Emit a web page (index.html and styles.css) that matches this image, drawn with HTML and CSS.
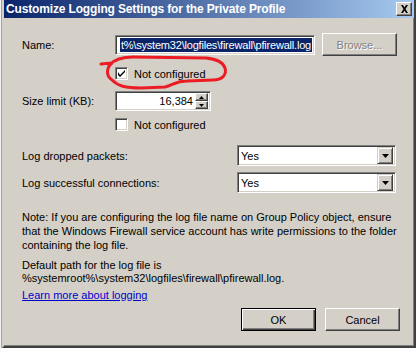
FILE: index.html
```html
<!DOCTYPE html>
<html lang="en">
<head>
    <meta charset="UTF-8">
    <title>Customize Logging Settings</title>
    <link rel="stylesheet" href="styles.css">
</head>
<body>
    <div class="screen">
        <div class="dialog">
            <!-- Title bar -->
            <div class="title-bar">
                <span class="title-text">Customize Logging Settings for the Private Profile</span>
                <span class="close-btn">
                    <svg width="9" height="8" viewBox="0 0 9 8"><path d="M1 0h2l1.5 2.5L6 0h2L5.5 4 8 8H6L4.5 5.5 3 8H1l2.5-4z" fill="#000"/></svg>
                </span>
            </div>

            <div class="content">
                <div class="row row-name">
                    <span class="label">Name:</span>
                    <div class="field field-name">
                        <span class="selected">t%\system32\logfiles\firewall\pfirewall.log</span>
                    </div>
                    <button class="btn btn-disabled">Browse...</button>
                </div>

                <div class="row row-check check-first">
                    <span class="checkbox">
                        <svg width="7" height="7" viewBox="0 0 7 7"><path d="M0 2v3l2 2 5-5V0L2 5z" fill="#000"/></svg>
                    </span>
                    <span>Not configured</span>
                </div>

                <div class="row row-size">
                    <span class="label">Size limit (KB):</span>
                    <div class="field field-spin">
                        <span class="spin-value">16,384</span>
                        <span class="spin-buttons">
                            <span class="spin-btn"><svg width="5" height="3" viewBox="0 0 5 3"><path d="M2.5 0L5 3H0z" fill="#000"/></svg></span>
                            <span class="spin-btn"><svg width="5" height="3" viewBox="0 0 5 3"><path d="M0 0h5L2.5 3z" fill="#000"/></svg></span>
                        </span>
                    </div>
                </div>

                <div class="row row-check check-second">
                    <span class="checkbox"></span>
                    <span>Not configured</span>
                </div>

                <div class="row row-select select-first">
                    <span class="label-wide">Log dropped packets:</span>
                    <div class="field select">
                        <span class="select-value">Yes</span>
                        <span class="select-arrow"><svg width="7" height="4" viewBox="0 0 7 4"><path d="M0 0h7L3.5 4z" fill="#000"/></svg></span>
                    </div>
                </div>

                <div class="row row-select select-second">
                    <span class="label-wide">Log successful connections:</span>
                    <div class="field select">
                        <span class="select-value">Yes</span>
                        <span class="select-arrow"><svg width="7" height="4" viewBox="0 0 7 4"><path d="M0 0h7L3.5 4z" fill="#000"/></svg></span>
                    </div>
                </div>

                <p class="note">Note: If you are configuring the log file name on Group Policy object, ensure<br>that the Windows Firewall service account has write permissions to the folder<br>containing the log file.</p>

                <p class="note note-path">Default path for the log file is<br>%systemroot%\system32\logfiles\firewall\pfirewall.log.</p>

                <a class="learn-link" href="#">Learn more about logging</a>

                <div class="actions">
                    <button class="btn btn-default">OK</button>
                    <button class="btn">Cancel</button>
                </div>
            </div>
        </div>

        <!-- Red hand-drawn annotation -->
        <svg class="annotation" width="418" height="353" viewBox="0 0 418 353">
            <path d="M100 64 L111 63 C106 67 104 75 111 80 C117 86 124 88 140 88 L164 87 C172 85 175 81 186 81 L212 80 C221 80 226 75 224 68 C222 62 215 59 205 58 L132 57 C121 57 113 60 108 65" fill="none" stroke="#ec1c24" stroke-width="3" stroke-linecap="round" stroke-linejoin="round"/>
        </svg>
    </div>
</body>
</html>
```

FILE: styles.css
```css
body {
    margin: 0;
    background-color: #ffffff;
    font-family: 'Liberation Sans', Arial, sans-serif;
    font-size: 11px;
    color: #000;
}

.screen {
    position: relative;
    width: 418px;
    height: 353px;
    overflow: hidden;
    border-left: 1px solid #f4f4f4;
    box-sizing: border-box;
}

.dialog {
    margin-left: 1px;
    width: 414px;
    height: 348px;
    box-sizing: border-box;
    background-color: #d4d0c8;
    border-left: 2px solid #d4d0c8;
    border-right: 2px solid #404040;
    border-bottom: 2px solid #404040;
    box-shadow: inset -1px -1px #808080, -1px 0 #a0a0a0;
    display: flex;
    flex-direction: column;
}

.title-bar {
    height: 18px;
    background: linear-gradient(to right, #0a246a, #a6caf0);
    display: flex;
    align-items: center;
    justify-content: space-between;
    padding: 0 2px 0 2px;
}

.title-text {
    color: #fff;
    font-weight: bold;
    font-size: 12px;
    letter-spacing: -0.15px;
}

.close-btn {
    width: 16px;
    height: 14px;
    box-sizing: border-box;
    background-color: #d4d0c8;
    border: 1px solid;
    border-color: #fff #404040 #404040 #fff;
    box-shadow: inset -1px -1px #808080;
    display: flex;
    align-items: center;
    justify-content: center;
}

.content {
    padding: 0 14px 0 18px;
    display: flex;
    flex-direction: column;
}

.row {
    display: flex;
    align-items: center;
}

.label {
    width: 93px;
    flex-shrink: 0;
}

.label-wide {
    flex: 1;
}

/* sunken edit box */
.field {
    box-sizing: border-box;
    background-color: #fff;
    border: 1px solid;
    border-color: #808080 #fff #fff #808080;
    box-shadow: inset 1px 1px #404040, inset -1px -1px #d4d0c8;
}

.row-name {
    margin-top: 15px;
    height: 23px;
}

.field-name {
    width: 200px;
    height: 20px;
    padding: 2px;
    display: flex;
    justify-content: flex-end;
    overflow: hidden;
}

.selected {
    background-color: #0a246a;
    color: #fff;
    white-space: nowrap;
    line-height: 14px;
    padding: 0 1px;
    letter-spacing: -0.2px;
}

.btn {
    box-sizing: border-box;
    width: 75px;
    height: 23px;
    font-family: 'Liberation Sans', Arial, sans-serif;
    font-size: 11px;
    color: #000;
    background-color: #d4d0c8;
    border: 1px solid;
    border-color: #fff #404040 #404040 #fff;
    box-shadow: inset -1px -1px #808080;
    padding: 0;
}

.btn-disabled {
    margin-left: 7px;
    color: #808080;
    text-shadow: 1px 1px #fff;
}

.row-check {
    height: 13px;
    padding-left: 93px;
}

.check-first {
    margin-top: 11px;
}

.check-second {
    margin-top: 7px;
}

.checkbox {
    box-sizing: border-box;
    width: 13px;
    height: 13px;
    margin-right: 6px;
    background-color: #fff;
    border: 1px solid;
    border-color: #808080 #fff #fff #808080;
    box-shadow: inset 1px 1px #404040, inset -1px -1px #d4d0c8;
    display: flex;
    align-items: center;
    justify-content: center;
}

.row-size {
    margin-top: 11px;
    height: 20px;
}

.field-spin {
    width: 96px;
    height: 20px;
    display: flex;
    align-items: center;
    justify-content: flex-end;
    padding: 2px;
}

.spin-value {
    padding-right: 2px;
}

.spin-buttons {
    width: 13px;
    height: 16px;
    display: flex;
    flex-direction: column;
}

.spin-btn {
    flex: 1;
    box-sizing: border-box;
    background-color: #d4d0c8;
    border: 1px solid;
    border-color: #fff #404040 #404040 #fff;
    box-shadow: inset -1px -1px #808080;
    display: flex;
    align-items: center;
    justify-content: center;
}

.row-select {
    height: 21px;
}

.select-first {
    margin-top: 14px;
}

.select-second {
    margin-top: 6px;
}

.select {
    width: 159px;
    height: 21px;
    margin-right: 4px;
    display: flex;
    align-items: center;
    padding: 2px;
}

.select-value {
    flex: 1;
    padding-left: 1px;
}

.select-arrow {
    width: 16px;
    height: 17px;
    box-sizing: border-box;
    background-color: #d4d0c8;
    border: 1px solid;
    border-color: #d4d0c8 #404040 #404040 #d4d0c8;
    box-shadow: inset 1px 1px #fff, inset -1px -1px #808080;
    display: flex;
    align-items: center;
    justify-content: center;
}

.note {
    margin: 17px 0 0 0;
    line-height: 14px;
}

.note-path {
    margin-top: 7px;
    line-height: 13px;
}

.learn-link {
    margin-top: 4px;
    line-height: 13px;
    color: #0000cc;
    align-self: flex-start;
}

.actions {
    margin-top: 6px;
    display: flex;
    justify-content: flex-end;
    gap: 9px;
}

.btn-default {
    border: 1px solid #000;
    box-shadow: inset 1px 1px #fff, inset -1px -1px #404040, inset -2px -2px #808080;
}

.annotation {
    position: absolute;
    left: 0;
    top: 0;
    pointer-events: none;
}
```
